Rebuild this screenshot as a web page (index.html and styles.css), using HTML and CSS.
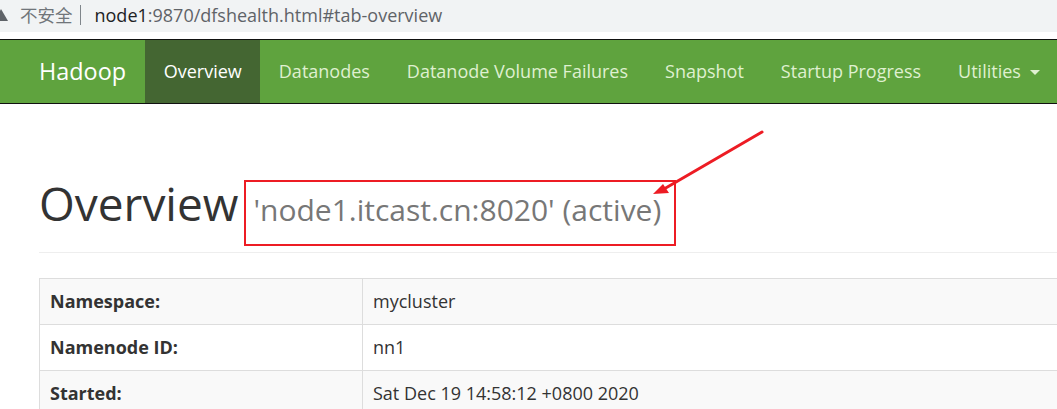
FILE: index.html
```html
<!DOCTYPE html>
<html lang="en">
<head>
    <meta charset="UTF-8">
    <title>Namenode information</title>
    <link rel="stylesheet" href="styles.css">
</head>
<body>
    <div class="addressbar">
        <svg class="warn" width="8" height="14" viewBox="0 0 8 14"><path d="M-6 13 L1 1 L8 13 Z" fill="#5f6368"/></svg>
        <span class="insecure">不安全</span>
        <span class="divider"></span>
        <span class="url"><b>node1</b>:9870/dfshealth.html#tab-overview</span>
    </div>
    <div class="navbar">
        <a class="brand">Hadoop</a>
        <a class="nav-item active">Overview</a>
        <a class="nav-item">Datanodes</a>
        <a class="nav-item">Datanode Volume Failures</a>
        <a class="nav-item">Snapshot</a>
        <a class="nav-item">Startup Progress</a>
        <a class="nav-item">Utilities <span class="caret"></span></a>
    </div>
    <div class="container">
        <div class="page-header">
            <h1>Overview <small>'node1.itcast.cn:8020' (active)</small></h1>
        </div>
        <table class="info">
            <tr><th>Namespace:</th><td>mycluster</td></tr>
            <tr><th>Namenode ID:</th><td>nn1</td></tr>
            <tr><th>Started:</th><td>Sat Dec 19 14:58:12 +0800 2020</td></tr>
        </table>
    </div>
    <!-- red annotation drawn over the screenshot -->
    <svg class="annotation" width="1057" height="409" viewBox="0 0 1057 409">
        <rect x="245" y="181" width="430" height="64" fill="none" stroke="#ed1c24" stroke-width="2"/>
        <path d="M762 132 L664 189" stroke="#ed1c24" stroke-width="3" stroke-linecap="round"/>
        <path d="M653 194 L663 184 L669 193 Z" fill="#ed1c24"/>
    </svg>
</body>
</html>
```

FILE: styles.css
```css
html, body {
    margin: 0;
    padding: 0;
    height: 409px;
    overflow: hidden;
    background-color: #fff;
}
body {
    font-family: "Open Sans", "Noto Sans CJK SC", sans-serif;
    color: #333;
    position: relative;
}
.addressbar {
    height: 32px;
    box-sizing: border-box;
    padding-bottom: 3px;
    background-color: #f1f3f4;
    display: flex;
    align-items: center;
    font-size: 18px;
    color: #5f6368;
}
.warn {
    margin-right: 12px;
}
.insecure {
    font-size: 17.5px;
    color: #70757a;
}
.divider {
    width: 1px;
    height: 20px;
    background-color: #80868b;
    margin: 0 13px 0 7px;
}
.url {
    margin-left: 1px;
}
.url b {
    font-weight: normal;
    color: #202124;
}
.navbar {
    margin-top: 7px;
    height: 63px;
    background-color: #5fa33e;
    border-top: 1px solid #111;
    border-bottom: 1px solid #111;
    display: flex;
    align-items: stretch;
    font-size: 18px;
}
.brand {
    color: #fff;
    font-size: 23.4px;
    padding: 0 19.25px 2px 39px;
    display: flex;
    align-items: center;
}
.nav-item {
    color: #dff0d0;
    padding: 0 18.5px 2px;
    display: flex;
    align-items: center;
    white-space: pre;
}
.nav-item.active {
    background-color: #446632;
    color: #fff;
}
.caret {
    display: inline-block;
    margin-left: 4px;
    margin-top: 3px;
    border-top: 5px solid #dff0d0;
    border-left: 5px solid transparent;
    border-right: 5px solid transparent;
}
.container {
    padding-left: 39px;
    overflow: hidden;
}
.page-header {
    height: 149px;
    box-sizing: border-box;
    border-bottom: 1px solid #eee;
    display: flex;
    align-items: flex-end;
    padding-bottom: 23px;
}
h1 {
    margin: 0;
    font-size: 46px;
    font-weight: normal;
    line-height: 1.1;
}
h1 small {
    font-size: 30px;
    color: #777;
    margin-left: 3px;
}
.info {
    margin-top: 25px;
    width: 1100px;
    border-collapse: collapse;
    font-size: 18px;
}
.info th, .info td {
    border: 1px solid #ddd;
    height: 46px;
    padding: 0 10px 2px;
    text-align: left;
    box-sizing: border-box;
}
.info th {
    width: 323px;
}
.info tr:nth-child(odd) {
    background-color: #f9f9f9;
}
.annotation {
    position: absolute;
    top: 0;
    left: 0;
    pointer-events: none;
}
```
